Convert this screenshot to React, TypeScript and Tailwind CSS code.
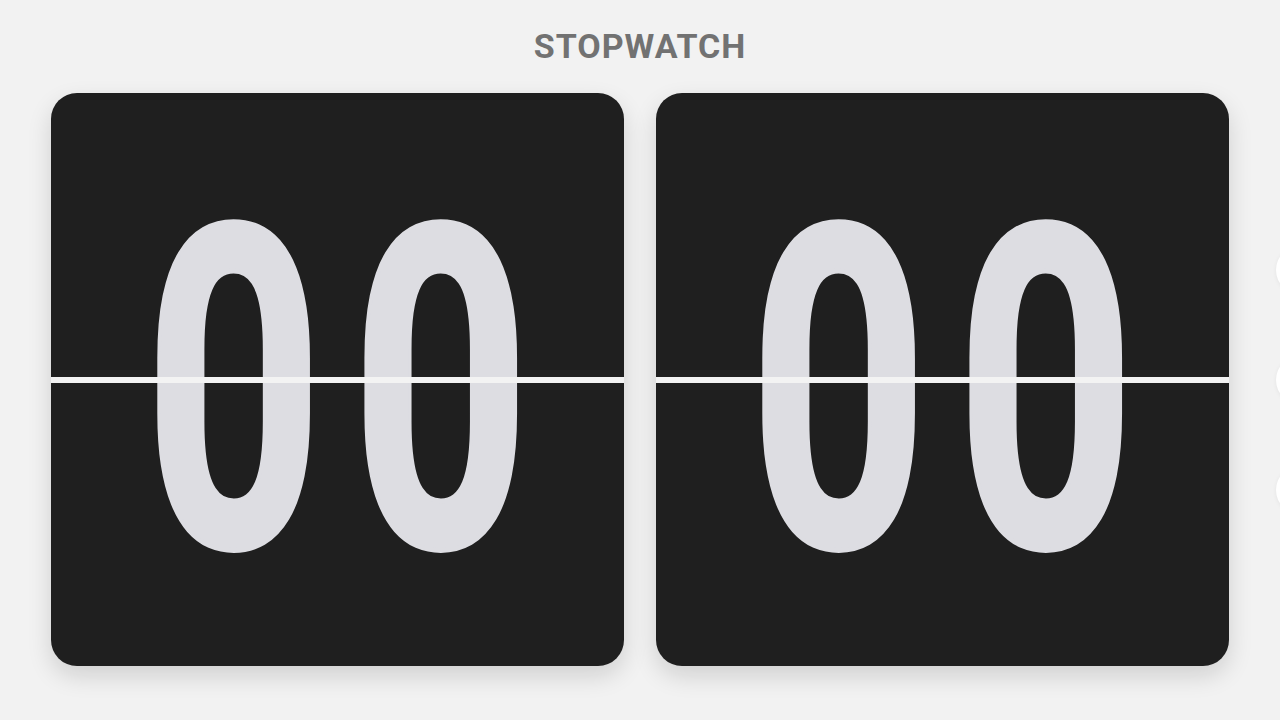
import React from "react";

const FlipCard = ({ value }: { value: string }) => {
    return (
        <div className="relative flex-1 h-[573px] rounded-[26px] bg-[#1f1f1f] shadow-[0_10px_24px_rgba(0,0,0,0.14)] overflow-hidden flex items-center justify-center">
            <span
                className="block text-[450px] leading-none font-bold text-[#dddde2] [-webkit-text-stroke:5px_#dddde2] tracking-[42px] pl-[42px] scale-x-[0.69] translate-y-[13px] select-none"
                style={{ fontFamily: "Roboto, 'Liberation Sans', sans-serif" }}
            >
                {value}
            </span>
            {/* split between the two flaps */}
            <div className="absolute left-0 right-0 top-[284px] h-[6px] bg-[#f3f3f3]" />
        </div>
    );
};

const App = () => {
    return (
        <div
            className="relative w-[1280px] h-[720px] bg-[#f2f2f2] overflow-hidden flex flex-col"
            style={{ fontFamily: "Roboto, 'Liberation Sans', sans-serif" }}
        >
            <h1 className="pt-[27px] h-[93px] text-center text-[34px] leading-[38px] font-bold tracking-[1px] text-[#727272]">
                STOPWATCH
            </h1>

            <div className="flex gap-[32px] px-[51px]">
                <FlipCard value="00" />
                <FlipCard value="00" />
            </div>

            {/* side buttons, mostly off screen */}
            <div className="absolute left-[1276px] top-[246px] w-[48px] h-[48px] rounded-full bg-white shadow-[0_1px_4px_rgba(0,0,0,0.06)]" />
            <div className="absolute left-[1276px] top-[356px] w-[48px] h-[48px] rounded-full bg-white shadow-[0_1px_4px_rgba(0,0,0,0.06)]" />
            <div className="absolute left-[1276px] top-[466px] w-[48px] h-[48px] rounded-full bg-white shadow-[0_1px_4px_rgba(0,0,0,0.06)]" />
        </div>
    );
};

export default App;
